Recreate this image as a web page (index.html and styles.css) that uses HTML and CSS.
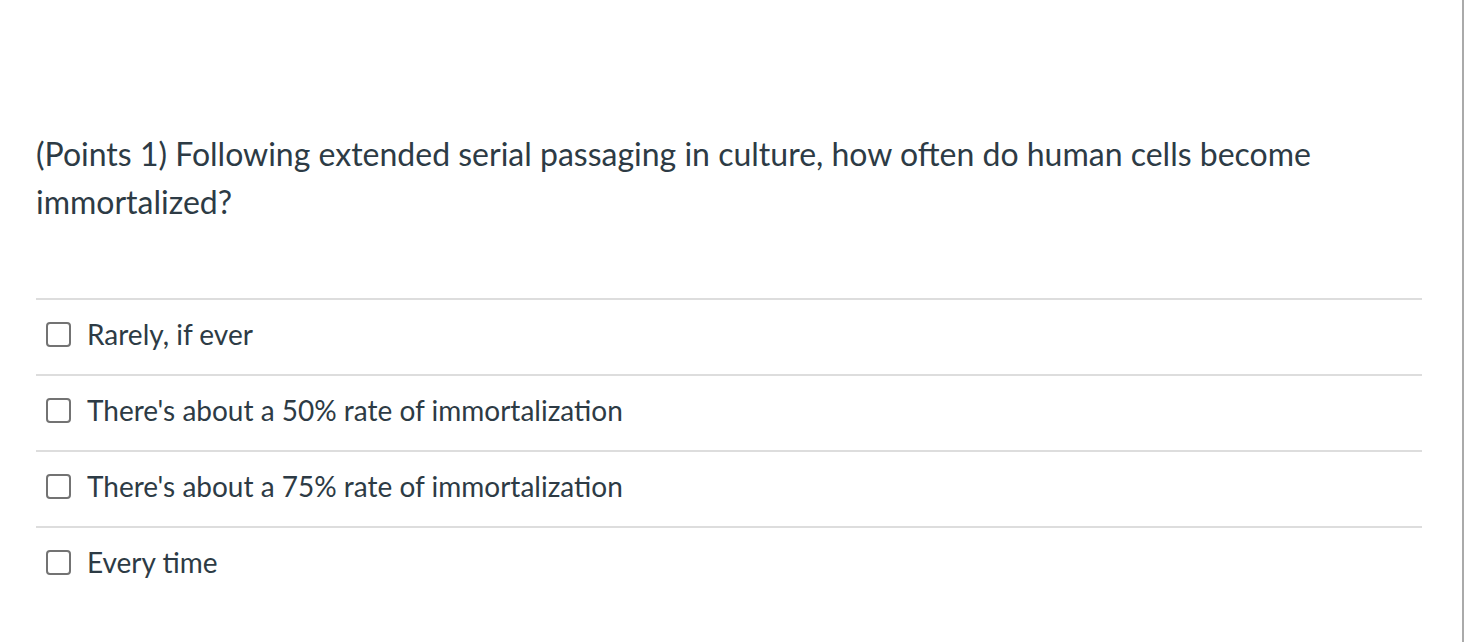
FILE: index.html
```html
<!DOCTYPE html>
<html>
<head>
<meta charset="utf-8">
<link rel="stylesheet" href="styles.css">
</head>
<body>
<div class="page">
  <div class="quiz">
    <div class="question">(Points 1) Following extended serial passaging in culture, how often do human cells become immortalized?</div>
    <div class="answers">
      <label class="answer"><span class="box"></span><span class="text">Rarely, if ever</span></label>
      <label class="answer"><span class="box"></span><span class="text">There's about a 50% rate of immortalization</span></label>
      <label class="answer"><span class="box"></span><span class="text">There's about a 75% rate of immortalization</span></label>
      <label class="answer"><span class="box"></span><span class="text">Every time</span></label>
    </div>
  </div>
</div>
</body>
</html>
```

FILE: styles.css
```css
html, body {
  margin: 0;
  padding: 0;
  background: #fff;
}
.page {
  width: 1462px;
  height: 642px;
  border-right: 2px solid #aaaaaa;
  box-sizing: content-box;
  overflow: hidden;
}
.quiz {
  padding: 130px 0 0 36px;
  width: 1386px;
  font-family: Lato, "Open Sans", sans-serif;
  color: #2d3b45;
}
.question {
  font-size: 32px;
  line-height: 48px;
  padding-right: 40px;
}
.answers {
  margin-top: 72px;
}
.answer {
  display: flex;
  align-items: center;
  gap: 16px;
  height: 68px;
  padding-bottom: 6px;
  border-top: 2px solid #dddddd;
  padding-left: 10px;
  font-size: 28px;
}
.box {
  width: 21px;
  height: 21px;
  border: 2px solid #737373;
  border-radius: 4px;
  flex: none;
}
```
